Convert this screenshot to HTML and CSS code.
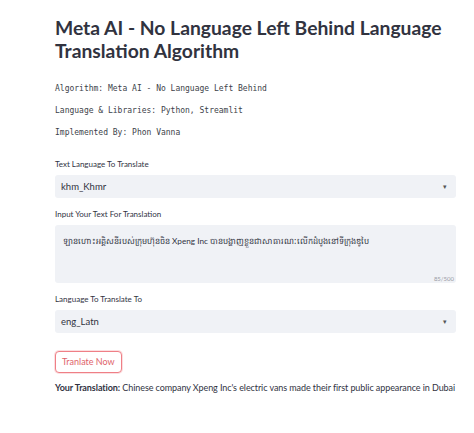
FILE: index.html
```html
<!DOCTYPE html>
<html lang="en">

<head>
    <meta charset="UTF-8">
    <meta name="viewport" content="width=device-width, initial-scale=1.0">
    <title>NLLB Translation</title>
    <link rel="stylesheet" href="styles.css">
</head>

<body>

    <main class="app">
        <h1 class="title">Meta AI - No Language Left Behind Language Translation Algorithm</h1>

        <div class="info">
            <p>Algorithm: Meta AI - No Language Left Behind</p>
            <p>Language &amp; Libraries: Python, Streamlit</p>
            <p>Implemented By: Phon Vanna</p>
        </div>

        <div class="field">
            <label class="field-label">Text Language To Translate</label>
            <div class="select">
                <span>khm_Khmr</span>
                <span class="caret">&#9662;</span>
            </div>
        </div>

        <div class="field">
            <label class="field-label">Input Your Text For Translation</label>
            <div class="textarea">
                <p class="km">ឡានហោះអគ្គិសនីរបស់ក្រុមហ៊ុនចិន Xpeng Inc បានបង្ហាញខ្លួនជាសាធារណៈលើកដំបូងនៅទីក្រុងឌូបៃ</p>
                <span class="counter">85/500</span>
            </div>
        </div>

        <div class="field">
            <label class="field-label">Language To Translate To</label>
            <div class="select">
                <span>eng_Latn</span>
                <span class="caret">&#9662;</span>
            </div>
        </div>

        <button class="btn">Tranlate Now</button>

        <p class="result"><strong>Your Translation:</strong> Chinese company Xpeng Inc's electric vans made their first public appearance in Dubai</p>
    </main>

</body>

</html>
```

FILE: styles.css
```css
* {
    margin: 0;
    padding: 0;
    box-sizing: border-box;
}

body {
    font-family: 'Lato', 'Noto Sans', sans-serif;
    background-color: #fff;
    color: #31333f;
}

.app {
    width: 401px;
    margin-left: 55px;
    padding-top: 16px;
    display: flex;
    flex-direction: column;
}

.title {
    font-size: 19.3px;
    font-weight: 700;
    line-height: 23px;
}

.info {
    margin-top: 22px;
    display: flex;
    flex-direction: column;
    gap: 12px;
}

.info p {
    font-family: 'DejaVu Sans Mono', monospace;
    font-size: 8px;
    line-height: 10px;
    color: #3d3f4a;
}

.field {
    display: flex;
    flex-direction: column;
    margin-top: 21px;
}

.field + .field {
    margin-top: 11px;
}

.field-label {
    font-size: 8px;
    line-height: 10px;
    margin-bottom: 6px;
}

.select {
    height: 23px;
    background-color: #f0f2f6;
    border-radius: 3px;
    display: flex;
    align-items: center;
    justify-content: space-between;
    padding: 0 9px 0 6px;
    font-size: 9.5px;
}

.caret {
    font-size: 7px;
    color: #555;
}

.textarea {
    position: relative;
    height: 58px;
    background-color: #f0f2f6;
    border-radius: 3px;
    padding: 9px 8px;
}

.km {
    font-size: 8.2px;
    line-height: 14px;
}

.counter {
    position: absolute;
    right: 2px;
    bottom: 1px;
    font-size: 6px;
    color: #9a9ca5;
}

.btn {
    align-self: flex-start;
    margin-top: 18px;
    padding: 4px 6px 5px;
    font-family: inherit;
    font-size: 9px;
    line-height: 11px;
    color: #e0636b;
    background: #fff;
    border: 1.5px solid #ef7f86;
    border-radius: 4px;
    box-shadow: 0 0 0 1px rgba(239, 127, 134, 0.25);
}

.result {
    margin-top: 9px;
    font-size: 9px;
    line-height: 12px;
    letter-spacing: -0.08px;
    white-space: nowrap;
}
```
